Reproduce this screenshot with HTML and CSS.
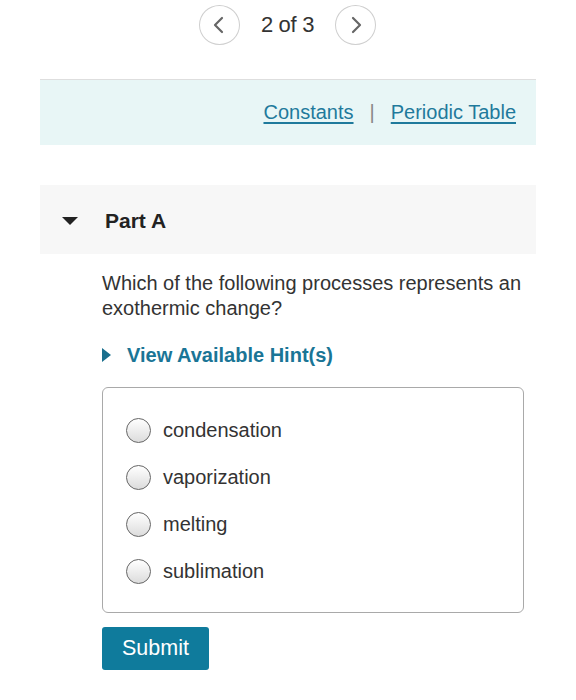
FILE: index.html
```html
<!DOCTYPE html>
<html>
<head>
<meta charset="utf-8">
<link rel="stylesheet" href="styles.css">
</head>
<body>
<div class="page">
  <nav class="pager">
    <button class="pager-btn" aria-label="Previous">
      <svg width="14" height="20" viewBox="0 0 14 20"><path d="M10 3 L3 10 L10 17" fill="none" stroke="#666" stroke-width="2.2" stroke-linecap="round" stroke-linejoin="round"/></svg>
    </button>
    <span class="pager-text">2 of 3</span>
    <button class="pager-btn" aria-label="Next">
      <svg width="14" height="20" viewBox="0 0 14 20"><path d="M4 3 L11 10 L4 17" fill="none" stroke="#666" stroke-width="2.2" stroke-linecap="round" stroke-linejoin="round"/></svg>
    </button>
  </nav>

  <div class="resources">
    <a href="#" class="res-link">Constants</a>
    <span class="sep">|</span>
    <a href="#" class="res-link">Periodic Table</a>
  </div>

  <div class="part-header">
    <span class="tri-down"></span>
    <span class="part-title">Part A</span>
  </div>

  <div class="part-body">
    <p class="question">Which of the following processes represents an exothermic change?</p>

    <div class="hint">
      <span class="tri-right"></span>
      <span class="hint-text">View Available Hint(s)</span>
    </div>

    <div class="options">
      <label class="option"><span class="radio"></span><span>condensation</span></label>
      <label class="option"><span class="radio"></span><span>vaporization</span></label>
      <label class="option"><span class="radio"></span><span>melting</span></label>
      <label class="option"><span class="radio"></span><span>sublimation</span></label>
    </div>

    <button class="submit">Submit</button>
  </div>
</div>
</body>
</html>
```

FILE: styles.css
```css
* { box-sizing: border-box; }
html, body { margin: 0; padding: 0; background: #fff; }
body {
  font-family: "Liberation Sans", Arial, sans-serif;
  color: #333;
}
.page {
  width: 496px;
  margin-left: 40px;
}
.pager {
  display: flex;
  align-items: center;
  justify-content: center;
  gap: 21px;
  height: 48px;
  padding-top: 2px;
  margin-left: -1px;
}
.pager-btn {
  width: 41px;
  height: 40px;
  border-radius: 50%;
  border: 1.5px solid #cfcfcf;
  background: #fff;
  display: flex;
  align-items: center;
  justify-content: center;
  padding: 0;
}
.pager-text {
  font-size: 22px;
  color: #333;
  letter-spacing: -0.3px;
}
.resources {
  margin-top: 31px;
  height: 66px;
  border-top: 1.5px solid #dedede;
  background: #e8f6f6;
  display: flex;
  align-items: center;
  justify-content: flex-end;
  padding-right: 20px;
  font-size: 20px;
}
.res-link {
  color: #1f7a9c;
  text-decoration: underline;
  text-underline-offset: 3px;
}
.sep {
  color: #888;
  margin: 0 16px;
}
.part-header {
  margin-top: 40px;
  height: 69px;
  background: #f7f7f7;
  display: flex;
  align-items: center;
  padding-top: 3px;
}
.tri-down {
  width: 0;
  height: 0;
  border-left: 8px solid transparent;
  border-right: 8px solid transparent;
  border-top: 8px solid #222;
  margin-left: 22px;
  margin-right: 27px;
}
.part-title {
  font-weight: bold;
  font-size: 21px;
  color: #222;
}
.part-body {
  padding-left: 62px;
  padding-right: 10px;
}
.question {
  margin: 17px 0 0;
  font-size: 20px;
  line-height: 25px;
  color: #333;
}
.hint {
  display: flex;
  align-items: center;
  margin-top: 21px;
  height: 26px;
}
.tri-right {
  width: 0;
  height: 0;
  border-top: 7px solid transparent;
  border-bottom: 7px solid transparent;
  border-left: 9px solid #1a6f8d;
  margin-right: 16px;
}
.hint-text {
  font-weight: bold;
  font-size: 20px;
  color: #1a7596;
}
.options {
  margin-top: 19px;
  width: 422px;
  border: 1.5px solid #a9a9a9;
  border-radius: 6px;
  padding: 30px 0 29px 23px;
  display: flex;
  flex-direction: column;
  gap: 23px;
}
.option {
  display: flex;
  align-items: center;
  height: 24px;
  font-size: 20px;
  color: #333;
}
.radio {
  width: 25px;
  height: 25px;
  border-radius: 50%;
  border: 1.5px solid #666;
  background: linear-gradient(#ffffff, #dcdcdc);
  margin-right: 12px;
  flex: none;
}
.submit {
  margin-top: 14px;
  width: 107px;
  height: 43px;
  border: none;
  border-radius: 3px;
  background: #0f7b9c;
  color: #fff;
  font-family: "Liberation Sans", Arial, sans-serif;
  font-size: 21.5px;
  padding: 0;
}
```
